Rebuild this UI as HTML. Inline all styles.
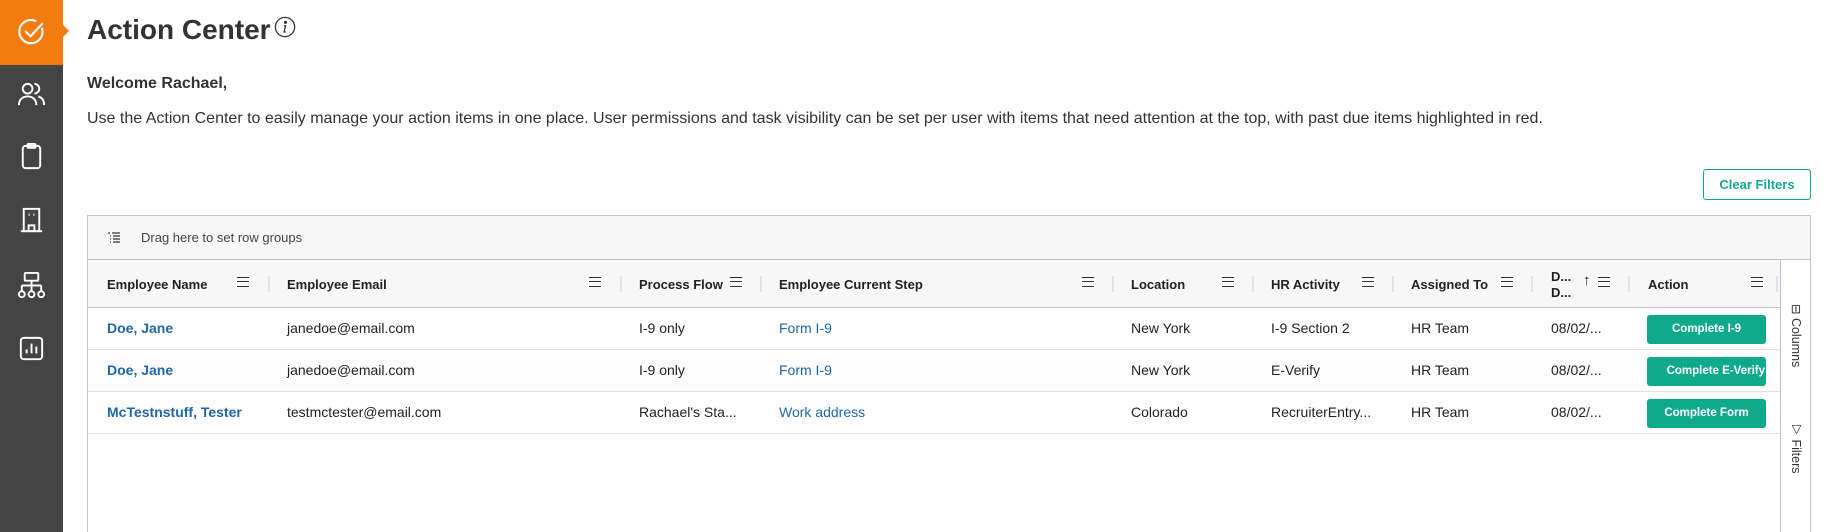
<!DOCTYPE html>
<html><head><meta charset="utf-8"><style>
*{box-sizing:border-box;margin:0;padding:0}
html,body{width:1826px;height:532px;overflow:hidden}
body{background:#fff;font-family:"Liberation Sans",sans-serif;color:#222;position:relative}
.side{position:absolute;left:0;top:0;width:63px;height:532px;background:#444}
.orange{position:absolute;left:0;top:0;width:63px;height:65px;background:#f47b0d}
.notch{position:absolute;left:63px;top:25px;width:0;height:0;border-top:6px solid transparent;border-bottom:6px solid transparent;border-left:6px solid #f47b0d}
.ic{position:absolute;left:16px;width:31px;height:31px}
h1{position:absolute;left:87px;top:14px;font-size:28px;font-weight:bold;color:#333}
.wel{position:absolute;left:87px;top:75px;font-size:16px;font-weight:bold;color:#333}
.p{position:absolute;left:87px;top:110px;font-size:16px;color:#333}
.cf{position:absolute;left:1703px;top:169px;width:108px;height:31px;border:1px solid #0fa98c;border-radius:3px;color:#0fa98c;font-weight:bold;font-size:13px;text-align:center;line-height:29px}
.grid{position:absolute;left:87px;top:215px;width:1724px;height:317px;border:1px solid #bfc3c9;border-bottom:none;overflow:hidden}
.gb{position:absolute;left:0;top:0;width:100%;height:44px;background:#f7f7f7;border-bottom:1px solid #bfc3c9;font-size:13px;color:#444;line-height:43px;padding-left:53px}
.hd{position:absolute;left:0;top:44px;width:1692px;height:48px;background:#f7f7f8;border-bottom:1px solid #bfc3c9}
.sp{position:absolute;left:1692px;top:44px;width:32px;height:280px;border-left:1px solid #bfc3c9}
.row{position:absolute;left:0;width:1692px;height:42px;border-bottom:1px solid #dde2eb;font-size:14px;color:#222}
.c{position:absolute;top:0;line-height:41px;white-space:nowrap}
.h{position:absolute;font-size:13px;font-weight:bold;color:#222;top:17px}
.m{position:absolute;top:17px;width:12px;height:10px;border-top:1.5px solid #333;border-bottom:1.5px solid #333}
.m:after{content:"";position:absolute;left:0;right:0;top:3px;border-top:1.5px solid #333}
.sep{position:absolute;top:16px;width:2px;height:16px;background:#dde2eb}
.lnk{color:#2266aa}
.nm{color:#2266aa;font-weight:bold}
.btn{position:absolute;left:1559px;top:7px;width:119px;height:29px;background:#0fa98c;border-radius:3px;color:#fff;font-weight:bold;font-size:11.5px;text-align:center;line-height:29px;white-space:nowrap;overflow:hidden}
.vt{position:absolute;left:1701px;font-size:12.5px;color:#333;writing-mode:vertical-rl}
</style></head><body>
<div class="side"></div><div class="orange"></div><div class="notch"></div>
<svg class="ic" style="top:16px" viewBox="0 0 32 32" fill="none" stroke="#fff" stroke-width="2.2" stroke-linecap="round"><path d="M27 13A12 12 0 1 1 20 5"/><path d="M10 16l5 5 12-13"/></svg>
<svg class="ic" style="top:79px" viewBox="0 0 32 32" fill="none" stroke="#fff" stroke-width="2"><circle cx="12" cy="10" r="5"/><path d="M3 27c0-6 4-9 9-9s9 3 9 9"/><path d="M19 5a5 5 0 0 1 0 10M23 18c4 1 6 4 6 9"/></svg>
<svg class="ic" style="top:141px" viewBox="0 0 32 32" fill="none" stroke="#fff" stroke-width="2"><rect x="7" y="5" width="18" height="23" rx="3"/><rect x="12" y="3" width="8" height="4" rx="1"/></svg>
<svg class="ic" style="top:205px" viewBox="0 0 32 32" fill="none" stroke="#fff" stroke-width="2"><rect x="8" y="4" width="16" height="23"/><path d="M5 27h22M13 27v-6h6v6"/><path d="M13 10h1M18 10h1" stroke-width="2.5"/></svg>
<svg class="ic" style="top:270px" viewBox="0 0 32 32" fill="none" stroke="#fff" stroke-width="2"><rect x="9" y="3" width="14" height="8" rx="1"/><path d="M16 11v5M6 16h20M6 16v6M16 16v6M26 16v6"/><circle cx="6" cy="25" r="3"/><circle cx="16" cy="25" r="3"/><circle cx="26" cy="25" r="3"/></svg>
<svg class="ic" style="top:333px" viewBox="0 0 32 32" fill="none" stroke="#fff" stroke-width="2"><rect x="5" y="5" width="22" height="22" rx="3"/><path d="M11 21v-4M16 21V11M21 21v-7"/></svg>
<h1>Action Center<svg style="vertical-align:1px;margin-left:3px" width="22" height="22" viewBox="0 0 24 24" fill="none" stroke="#333" stroke-width="1.4"><circle cx="12" cy="12" r="10.5"/><circle cx="12.5" cy="7" r="1" fill="#333"/><path d="M11 10.5h1.5l-1.5 7h2"/></svg></h1>
<div class="wel">Welcome Rachael,</div>
<div class="p">Use the Action Center to easily manage your action items in one place. User permissions and task visibility can be set per user with items that need attention at the top, with past due items highlighted in red.</div>
<div class="cf">Clear Filters</div>
<div class="grid">
<div class="gb"><svg style="position:absolute;left:20px;top:16px" width="12" height="11" viewBox="0 0 12 11" stroke="#333" stroke-width="1.2"><path d="M0 1h2M4 1h8M2 4h1M5 4h7M2 7h1M5 7h7M2 10h1M5 10h7"/></svg>Drag here to set row groups</div>
<div class="hd">
<div class="h" style="left:19px">Employee Name</div><div class="m" style="left:149px"></div><div class="sep" style="left:180px"></div>
<div class="h" style="left:199px">Employee Email</div><div class="m" style="left:501px"></div><div class="sep" style="left:532px"></div>
<div class="h" style="left:551px">Process Flow</div><div class="m" style="left:642px"></div><div class="sep" style="left:672px"></div>
<div class="h" style="left:691px">Employee Current Step</div><div class="m" style="left:994px"></div><div class="sep" style="left:1024px"></div>
<div class="h" style="left:1043px">Location</div><div class="m" style="left:1134px"></div><div class="sep" style="left:1164px"></div>
<div class="h" style="left:1183px">HR Activity</div><div class="m" style="left:1274px"></div><div class="sep" style="left:1304px"></div>
<div class="h" style="left:1323px">Assigned To</div><div class="m" style="left:1413px"></div><div class="sep" style="left:1443px"></div>
<div class="h" style="left:1463px;top:9px;line-height:16px">D...<br>D...</div><div style="position:absolute;left:1495px;top:12px;font-size:15px;font-weight:bold">↑</div><div class="m" style="left:1510px"></div><div class="sep" style="left:1540px"></div>
<div class="h" style="left:1560px">Action</div><div class="m" style="left:1663px"></div><div class="sep" style="left:1688px"></div>
</div>
<div class="row" style="top:92px"><div class="c nm" style="left:19px">Doe, Jane</div><div class="c" style="left:199px">janedoe@email.com</div><div class="c" style="left:551px">I-9 only</div><div class="c lnk" style="left:691px">Form I-9</div><div class="c" style="left:1043px">New York</div><div class="c" style="left:1183px">I-9 Section 2</div><div class="c" style="left:1323px">HR Team</div><div class="c" style="left:1463px">08/02/...</div><div class="btn">Complete I-9</div></div>
<div class="row" style="top:134px;background:#fcfcfc"><div class="c nm" style="left:19px">Doe, Jane</div><div class="c" style="left:199px">janedoe@email.com</div><div class="c" style="left:551px">I-9 only</div><div class="c lnk" style="left:691px">Form I-9</div><div class="c" style="left:1043px">New York</div><div class="c" style="left:1183px">E-Verify</div><div class="c" style="left:1323px">HR Team</div><div class="c" style="left:1463px">08/02/...</div><div class="btn" style="text-align:right;padding-right:1px">Complete E-Verify</div></div>
<div class="row" style="top:176px"><div class="c nm" style="left:19px">McTestnstuff, Tester</div><div class="c" style="left:199px">testmctester@email.com</div><div class="c" style="left:551px">Rachael's Sta...</div><div class="c lnk" style="left:691px">Work address</div><div class="c" style="left:1043px">Colorado</div><div class="c" style="left:1183px">RecruiterEntry...</div><div class="c" style="left:1323px">HR Team</div><div class="c" style="left:1463px">08/02/...</div><div class="btn">Complete Form</div></div>
<div class="sp"></div>
<div class="vt" style="top:88px">⊟ Columns</div>
<div class="vt" style="top:205px">▽ Filters</div>
</div>
</body></html>
